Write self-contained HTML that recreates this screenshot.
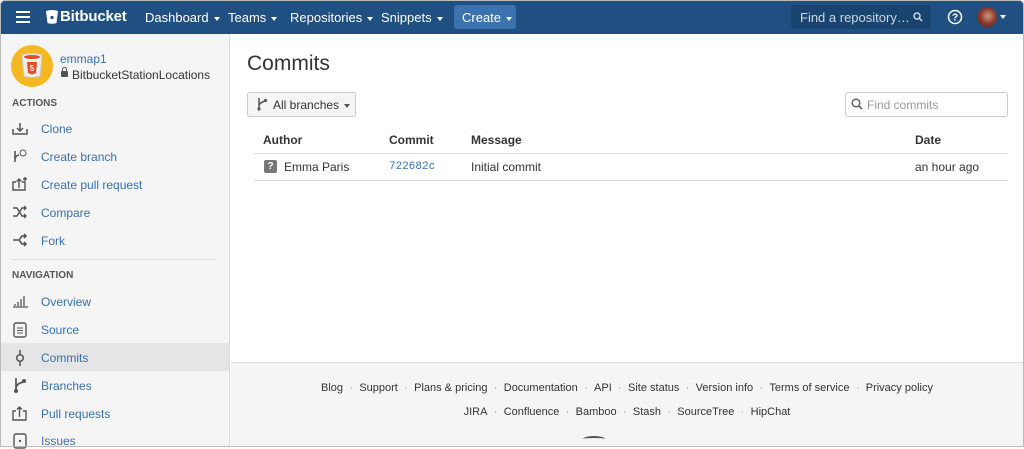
<!DOCTYPE html>
<html><head><meta charset="utf-8"><style>
*{margin:0;padding:0;box-sizing:border-box}
body{width:1024px;height:447px;overflow:hidden;font-family:"Liberation Sans",Arial,sans-serif;font-size:12px;color:#333;background:#fff;position:relative}
.frame{position:absolute;left:0;top:0;width:1024px;height:447px;border:1px solid #bbb;border-radius:5px 5px 0 0;pointer-events:none}
.top{position:absolute;left:0;top:0;width:1024px;height:34px;background:#205081;border-radius:5px 5px 0 0;color:#fff}
.top span{position:absolute;top:10px;font-size:13px}
.caret{display:inline-block;width:0;height:0;border-left:3.5px solid transparent;border-right:3.5px solid transparent;border-top:4px solid #fff;vertical-align:middle;margin-left:5px}
.side{position:absolute;left:0;top:34px;width:230px;height:413px;background:#f5f5f5;border-right:1px solid #ddd}
.side .h{position:absolute;left:12px;font-size:10px;font-weight:bold;color:#555}
.side .it{position:absolute;left:41px;color:#3572b0;font-size:12px}
.ic{position:absolute;left:12px;width:16px;height:14px}
a{color:#3572b0;text-decoration:none}
.foot{position:absolute;left:231px;top:362px;width:792px;height:85px;background:#f5f5f5;border-top:1px solid #ddd;font-size:11px;color:#333;text-align:center}
.foot .d{color:#999;margin:0 6.3px}
</style></head><body>
<div class="top">
 <div style="position:absolute;left:16px;top:11px;width:14px;height:2px;background:#fff;box-shadow:0 5px 0 #fff,0 10px 0 #fff"></div>
 <svg style="position:absolute;left:46px;top:10px" width="12" height="14" viewBox="0 0 12 14"><path d="M0 1 Q6 -1 12 1 L10.5 13 Q6 14.5 1.5 13 Z" fill="#fff"/><circle cx="6" cy="7.5" r="1.6" fill="#205081"/></svg>
 <span style="left:60px;top:8px;font-size:15px;font-weight:bold;letter-spacing:-0.2px">Bitbucket</span>
 <span style="left:145px">Dashboard<i class="caret"></i></span>
 <span style="left:228px">Teams<i class="caret"></i></span>
 <span style="left:290px">Repositories<i class="caret"></i></span>
 <span style="left:381px">Snippets<i class="caret"></i></span>
 <div style="position:absolute;left:454px;top:5px;width:62px;height:24px;background:#3b73af;border-radius:3px"></div>
 <span style="left:462px">Create<i class="caret"></i></span>
 <div style="position:absolute;left:791px;top:5px;width:140px;height:24px;background:#1a4470;border-radius:3px"></div>
 <span style="left:800px;color:#ccd6e4">Find a repository…</span>
 <svg style="position:absolute;left:913px;top:12px" width="10" height="10"><circle cx="4" cy="4" r="3" stroke="#ccd6e4" stroke-width="1.5" fill="none"/><path d="M6 6l3 3" stroke="#ccd6e4" stroke-width="1.5"/></svg>
 <svg style="position:absolute;left:947px;top:9px" width="16" height="16"><circle cx="8" cy="8" r="6.5" stroke="#fff" stroke-width="1.5" fill="none"/><text x="8" y="11.5" font-size="10" fill="#fff" text-anchor="middle" font-family="Liberation Sans" font-weight="bold">?</text></svg>
 <div style="position:absolute;left:977px;top:7px;width:20px;height:20px;border-radius:50%;background:radial-gradient(circle at 55% 45%,#c99a80 0,#8a3a2a 50%,#4a1a14 100%)"></div>
 <i class="caret" style="position:absolute;left:995px;top:15px"></i>
</div>
<div class="side">
 <div style="position:absolute;left:11px;top:11px;width:42px;height:42px;border-radius:50%;background:#f5b820"></div>
 <svg style="position:absolute;left:21px;top:19px" width="22" height="26" viewBox="0 0 22 26"><path d="M1 2 Q11 -1 21 2 L19 23 Q11 26 3 23 Z" fill="#eee" stroke="#ccc"/><ellipse cx="11" cy="4" rx="8" ry="2" fill="#e34c26"/><path d="M6 9 L16 9 L15 20 L11 21.5 L7 20 Z" fill="#e34c26"/><text x="11" y="18" font-size="8" fill="#fff" text-anchor="middle" font-weight="bold" font-family="Liberation Sans">5</text></svg>
 <a style="position:absolute;left:60px;top:18px;font-size:12px">emmap1</a>
 <div style="position:absolute;left:61px;top:37px;width:7px;height:6px;background:#555;border-radius:1px"></div>
 <div style="position:absolute;left:62px;top:33px;width:5px;height:5px;border:1.3px solid #555;border-bottom:none;border-radius:3px 3px 0 0"></div>
 <div style="position:absolute;left:72px;top:34px;font-size:12px;color:#333">BitbucketStationLocations</div>
 <div class="h" style="top:64px">ACTIONS</div>
 <svg class="ic" style="top:88px"><path d="M1 7v5h14V7M8 1v8M5 6l3 3 3-3" stroke="#555" stroke-width="1.5" fill="none"/></svg><a class="it" style="top:88px">Clone</a>
 <svg class="ic" style="top:115px"><path d="M3 2v11M3 10 Q3 7 7 6" stroke="#555" stroke-width="1.6" fill="none"/><circle cx="11" cy="4" r="3" stroke="#555" fill="none"/></svg><a class="it" style="top:116px">Create branch</a>
 <svg class="ic" style="top:143px"><path d="M4 5H1v8h12V5h-3M7 11V2M4.5 4.5 7 2l2.5 2.5M13 0v4M11 2h4" stroke="#555" stroke-width="1.4" fill="none"/></svg><a class="it" style="top:144px">Create pull request</a>
 <svg class="ic" style="top:171px"><path d="M1 3h4l5 8h4M1 11h4l5-8h4M12 1l2 2-2 2M12 9l2 2-2 2" stroke="#555" stroke-width="1.4" fill="none"/></svg><a class="it" style="top:172px">Compare</a>
 <svg class="ic" style="top:199px"><path d="M1 7h6M7 7l3-4h4M7 7l3 4h4M12 1l2 2-2 2M12 9l2 2-2 2" stroke="#555" stroke-width="1.6" fill="none"/></svg><a class="it" style="top:200px">Fork</a>
 <div style="position:absolute;left:12px;top:225px;width:205px;height:1px;background:#ddd"></div>
 <div class="h" style="top:236px">NAVIGATION</div>
 <svg class="ic" style="top:260px"><path d="M1 13h15M3 12v-2M6 12V8M9 12V5M12 12V2" stroke="#555" stroke-width="1.3"/></svg><a class="it" style="top:261px">Overview</a>
 <svg class="ic" style="top:288px;height:16px"><rect x="2" y="1" width="12" height="14" rx="2" stroke="#555" stroke-width="1.4" fill="none"/><path d="M5 6h6M5 8.5h6M5 11h6" stroke="#555"/></svg><a class="it" style="top:289px">Source</a>
 <div style="position:absolute;left:0;top:309px;width:229px;height:28px;background:#e5e5e5"></div>
 <svg class="ic" style="top:316px;height:16px"><path d="M8 0v4M8 12v4" stroke="#555" stroke-width="1.5"/><circle cx="8" cy="8" r="3.3" stroke="#555" stroke-width="1.5" fill="none"/></svg><a class="it" style="top:317px">Commits</a>
 <svg class="ic" style="top:343px;height:16px"><path d="M4 1v14M4 11 Q4 7 11 5" stroke="#555" stroke-width="1.7" fill="none"/><circle cx="12" cy="4" r="2" fill="#555"/><circle cx="4" cy="14" r="2" fill="#555"/></svg><a class="it" style="top:345px">Branches</a>
 <svg class="ic" style="top:371px;height:16px"><path d="M4 6H1v9h13V6h-3M7.5 12V2M5 4.5 7.5 2 10 4.5" stroke="#555" stroke-width="1.4" fill="none"/></svg><a class="it" style="top:373px">Pull requests</a>
 <svg class="ic" style="top:399px;height:16px"><rect x="2" y="1" width="12" height="14" rx="2" stroke="#555" stroke-width="1.4" fill="none"/><circle cx="8" cy="8" r="1.2" fill="#555"/></svg><a class="it" style="top:400px">Issues</a>
</div>
<div style="position:absolute;left:247px;top:52px;font-size:21px;color:#333">Commits</div>
<div style="position:absolute;left:247px;top:92px;width:109px;height:25px;border:1px solid #ccc;border-radius:3px;background:#f5f5f5"></div>
<svg style="position:absolute;left:256px;top:97px" width="12" height="14"><path d="M3 1v12M3 9 Q3 6 9 4" stroke="#555" stroke-width="1.5" fill="none"/><circle cx="9.5" cy="3.5" r="1.6" fill="#555"/><circle cx="3" cy="12" r="1.6" fill="#555"/></svg>
<div style="position:absolute;left:273px;top:98px;font-size:12px">All branches<i class="caret" style="border-top-color:#555"></i></div>
<div style="position:absolute;left:845px;top:92px;width:163px;height:25px;border:1px solid #ccc;border-radius:3px"></div>
<svg style="position:absolute;left:851px;top:98px" width="12" height="12"><circle cx="5" cy="5" r="3.8" stroke="#666" stroke-width="1.5" fill="none"/><path d="M8 8l3 3" stroke="#666" stroke-width="1.8"/></svg>
<div style="position:absolute;left:867px;top:98px;font-size:12px;color:#999">Find commits</div>
<div style="position:absolute;top:133px;left:263px;font-weight:bold">Author</div>
<div style="position:absolute;top:133px;left:389px;font-weight:bold">Commit</div>
<div style="position:absolute;top:133px;left:471px;font-weight:bold">Message</div>
<div style="position:absolute;top:133px;left:915px;font-weight:bold">Date</div>
<div style="position:absolute;left:254px;top:153px;width:754px;height:1px;background:#ddd"></div>
<div style="position:absolute;left:264px;top:160px;width:13px;height:13px;background:#777;border-radius:2px;color:#fff;font-size:10px;font-weight:bold;text-align:center;line-height:13px">?</div>
<div style="position:absolute;top:160px;left:284px">Emma Paris</div>
<div style="position:absolute;top:161px;left:389px;font-family:'Liberation Mono',monospace;font-size:11px;color:#3572b0">722682c</div>
<div style="position:absolute;top:160px;left:471px">Initial commit</div>
<div style="position:absolute;top:160px;left:915px">an hour ago</div>
<div style="position:absolute;left:254px;top:180px;width:754px;height:1px;background:#ddd"></div>
<div class="foot">
 <div style="position:absolute;top:19px;width:100%">Blog<span class="d">·</span>Support<span class="d">·</span>Plans &amp; pricing<span class="d">·</span>Documentation<span class="d">·</span>API<span class="d">·</span>Site status<span class="d">·</span>Version info<span class="d">·</span>Terms of service<span class="d">·</span>Privacy policy</div>
 <div style="position:absolute;top:43px;width:100%">JIRA<span class="d">·</span>Confluence<span class="d">·</span>Bamboo<span class="d">·</span>Stash<span class="d">·</span>SourceTree<span class="d">·</span>HipChat</div>
 <div style="position:absolute;top:73px;left:352px;width:22px;height:6px;border-top:2px solid #555;border-radius:50% 50% 0 0"></div>
</div>
<div class="frame"></div>
</body></html>
